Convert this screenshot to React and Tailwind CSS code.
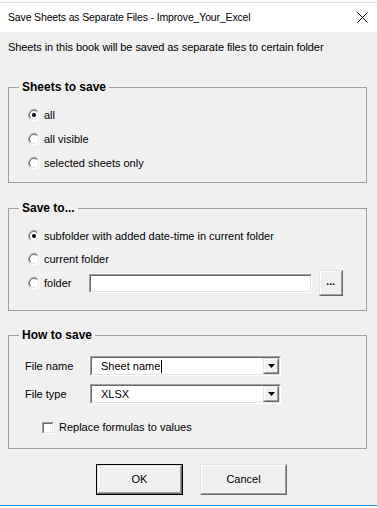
import React, { useState } from 'react';

const raised = 'border border-t-[#e3e3e3] border-l-[#e3e3e3] border-b-[#696969] border-r-[#696969]';
const raisedInner = 'border border-t-white border-l-white border-b-[#a0a0a0] border-r-[#a0a0a0]';

function Radio({ checked, onClick }) {
    return (
        <svg width="12" height="12" viewBox="0 0 12 12" className="shrink-0" onClick={onClick}>
            <circle cx="6" cy="6" r="5.5" fill="#fff" />
            <path d="M2.1 9.9 A5.5 5.5 0 0 1 9.9 2.1" stroke="#a0a0a0" fill="none" />
            <path d="M9.9 2.1 A5.5 5.5 0 0 1 2.1 9.9" stroke="#ffffff" fill="none" />
            <path d="M2.8 9.2 A4.5 4.5 0 0 1 9.2 2.8" stroke="#696969" fill="none" />
            <path d="M9.2 2.8 A4.5 4.5 0 0 1 2.8 9.2" stroke="#e3e3e3" fill="none" />
            {checked && <circle cx="6" cy="6" r="2" fill="#000" />}
        </svg>
    );
}

function Option({ label, checked, onClick, className = 'h-[24px]', children }) {
    return (
        <div className={`flex items-center ${className}`}>
            <div className="flex items-center gap-[4px] cursor-default" onClick={onClick}>
                <Radio checked={checked} />
                <span>{label}</span>
            </div>
            {children}
        </div>
    );
}

function Sunken({ className = '', children }) {
    return (
        <div className={`border border-t-[#a0a0a0] border-l-[#a0a0a0] border-b-white border-r-white ${className}`}>
            <div className="h-full border border-t-[#696969] border-l-[#696969] border-b-[#e3e3e3] border-r-[#e3e3e3] bg-white flex items-center">
                {children}
            </div>
        </div>
    );
}

function Combo({ value, caret }) {
    return (
        <Sunken className="w-[191px] h-[20px]">
            <span className="flex-1 pl-[9px] flex items-center">
                {value}
                {caret && <span className="inline-block w-[1px] h-[13px] bg-black ml-[1px]" />}
            </span>
            <div className={`w-[16px] h-[16px] ${raised}`}>
                <div className={`h-full ${raisedInner} bg-[#f0f0f0] flex items-center justify-center`}>
                    <svg width="7" height="4" viewBox="0 0 7 4"><path d="M0 0H7L3.5 4Z" fill="#000" /></svg>
                </div>
            </div>
        </Sunken>
    );
}

// fieldset padding would push the legend too, so the body gets its own padding
function Group({ title, className, bodyClass, children }) {
    return (
        <fieldset className={`ml-[8px] w-[359px] border border-[#a0a0a0] ${className}`}>
            <legend className="ml-[10px] px-[3px] font-bold text-[12px] leading-[14px]">{title}</legend>
            <div className={bodyClass}>{children}</div>
        </fieldset>
    );
}

export default function App() {
    const [sheets, setSheets] = useState(0);
    const [target, setTarget] = useState(0);
    const [formulas, setFormulas] = useState(false);

    return (
        <div className="w-[377px] h-[508px] bg-[#f0f0f0] flex flex-col text-[11px] text-black font-['Liberation_Sans',Arial,sans-serif] overflow-hidden">
            <div className="h-[3px] bg-white border-b border-[#dcdcdc]" />
            <div className="h-[29px] bg-white flex items-center justify-between pl-[8px] pr-[9px]">
                <span className="text-[10.5px] tracking-[-0.15px]">Save Sheets as Separate Files - Improve_Your_Excel</span>
                <svg width="11" height="11" viewBox="0 0 11 11">
                    <path d="M0.5 0.5L10.5 10.5M10.5 0.5L0.5 10.5" stroke="#000" strokeWidth="1" />
                </svg>
            </div>

            <p className="mt-[8px] pl-[8px] leading-[14px] tracking-[-0.08px]">Sheets in this book will be saved as separate files to certain folder</p>

            <Group title="Sheets to save" className="mt-[26px]" bodyClass="pl-[19px] pt-[9px] pb-[7px]">
                {['all', 'all visible', 'selected sheets only'].map((s, i) => (
                    <Option key={s} label={s} checked={sheets === i} onClick={() => setSheets(i)} />
                ))}
            </Group>

            <Group title="Save to..." className="mt-[18px]" bodyClass="pl-[19px] pt-[9px] pb-[14px]">
                <Option label="subfolder with added date-time in current folder" checked={target === 0} onClick={() => setTarget(0)} />
                <Option label="current folder" className="h-[22px]" checked={target === 1} onClick={() => setTarget(1)} />
                <Option label="folder" className="h-[26px]" checked={target === 2} onClick={() => setTarget(2)}>
                    <Sunken className="ml-[17px] w-[223px] h-[19px]" />
                    <div className={`ml-[7px] w-[24px] h-[26px] ${raised}`}>
                        <div className={`h-full ${raisedInner} bg-[#f0f0f0] flex items-center justify-center font-bold text-[10px] pb-[4px]`}>...</div>
                    </div>
                </Option>
            </Group>

            <Group title="How to save" className="mt-[17px]" bodyClass="pl-[16px] pt-[14px] pb-[13px]">
                <div className="flex items-center">
                    <span className="w-[65px]">File name</span>
                    <Combo value="Sheet name" caret />
                </div>
                <div className="flex items-center mt-[8px]">
                    <span className="w-[65px]">File type</span>
                    <Combo value="XLSX" />
                </div>
                <div className="flex items-center mt-[16px] ml-[17px] h-[15px] gap-[5px]" onClick={() => setFormulas(!formulas)}>
                    <div className="w-[12px] h-[12px] border border-t-[#a0a0a0] border-l-[#a0a0a0] border-b-white border-r-white">
                        <div className="h-full border border-t-[#696969] border-l-[#696969] border-b-[#e3e3e3] border-r-[#e3e3e3] bg-white flex items-center justify-center text-[9px] leading-none">
                            {formulas ? '✓' : ''}
                        </div>
                    </div>
                    <span>Replace formulas to values</span>
                </div>
            </Group>

            <div className="flex mt-[15px] pl-[96px] gap-[17px]">
                <button className="w-[87px] h-[31px] border border-black">
                    <div className={`h-full ${raised}`}>
                        <div className={`h-full ${raisedInner} flex items-center justify-center`}>OK</div>
                    </div>
                </button>
                <button className={`w-[87px] h-[31px] ${raised}`}>
                    <div className={`h-full ${raisedInner} flex items-center justify-center`}>Cancel</div>
                </button>
            </div>

            <div className="flex-1" />
            <div className="h-[1px] bg-[#2b88d8]" />
            <div className="h-[2px] bg-white" />
        </div>
    );
}
